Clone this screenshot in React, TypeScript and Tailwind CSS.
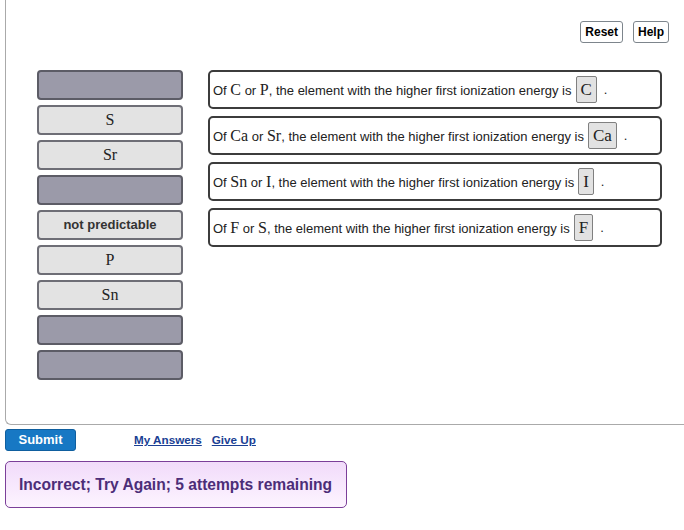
import React from 'react';

const tiles: (string | null)[] = [null, 'S', 'Sr', null, 'not predictable', 'P', 'Sn', null, null];

const rows = [
  { a: 'C', b: 'P', ans: 'C' },
  { a: 'Ca', b: 'Sr', ans: 'Ca' },
  { a: 'Sn', b: 'I', ans: 'I' },
  { a: 'F', b: 'S', ans: 'F' },
];

const serif = "font-['Liberation_Serif',serif]";

function Tile({ label }: { label: string | null }) {
  if (label === null) {
    return <div className="h-[30px] rounded-[4px] border-2 border-[#5c5c66] bg-[#9b9aa9]" />;
  }
  const isWord = label === 'not predictable';
  return (
    <div className="flex h-[30px] items-center justify-center rounded-[4px] border-2 border-[#6e6e76] bg-[#e3e3e3] text-[#222]">
      {isWord ? (
        <span className="text-[13px] font-bold text-[#333]">{label}</span>
      ) : (
        <span className={`${serif} text-[16px]`}>{label}</span>
      )}
    </div>
  );
}

export default function App() {
  return (
    <div className="w-[684px] h-[530px] overflow-hidden bg-white font-['Liberation_Sans',Arial,sans-serif]">
      <div className="ml-[5px] w-[679px] h-[425px] border-l border-b border-[#aaaaaa] rounded-bl-[6px] flex flex-col">
        <div className="flex justify-end gap-[10px] pt-[21px] pr-[15px]">
          <button className="h-[22px] px-[4px] rounded-[3px] border border-[#7d858c] bg-white text-[12px] font-bold text-black">Reset</button>
          <button className="h-[22px] px-[4px] rounded-[3px] border border-[#7d858c] bg-white text-[12px] font-bold text-black">Help</button>
        </div>
        <div className="flex gap-[25px] pl-[31px] pt-[27px]">
          <div className="flex w-[146px] flex-col gap-[5px]">
            {tiles.map((t, i) => (
              <Tile key={i} label={t} />
            ))}
          </div>
          <div className="flex w-[454px] flex-col gap-[7px]">
            {rows.map((r, i) => (
              <div key={i} className="flex h-[39px] items-center rounded-[5px] border-2 border-[#3c3c3c] pl-[3px] text-[13px] text-[#222]">
                <span>
                  Of <span className={`${serif} text-[16px]`}>{r.a}</span> or{' '}
                  <span className={`${serif} text-[16px]`}>{r.b}</span>, the element with the higher first ionization energy is
                </span>
                <span className={`ml-[4px] flex h-[27px] items-center rounded-[2px] border-[1.5px] border-[#808080] bg-[#e2e2e2] px-[4px] ${serif} text-[17px]`}>
                  {r.ans}
                </span>
                <span className="ml-[7px]">.</span>
              </div>
            ))}
          </div>
        </div>
      </div>
      <div className="ml-[5px] mt-[4px] flex items-center">
        <button className="h-[22px] w-[71px] rounded-[3px] border border-[#0f5f9f] bg-[#1778c4] text-[13px] font-bold text-white">Submit</button>
        <a className="ml-[58px] text-[11.7px] font-bold text-[#1b3f94] underline" href="#">My Answers</a>
        <a className="ml-[10px] text-[11.7px] font-bold text-[#1b3f94] underline" href="#">Give Up</a>
      </div>
      <div className="ml-[5px] mt-[10px] flex h-[47px] w-[342px] items-center rounded-[5px] border border-[#7b3f99] bg-gradient-to-b from-[#f1dbfa] to-[#fdf4ff] pl-[13px] text-[15.6px] font-bold text-[#4c2d78]">
        Incorrect; Try Again; 5 attempts remaining
      </div>
    </div>
  );
}
